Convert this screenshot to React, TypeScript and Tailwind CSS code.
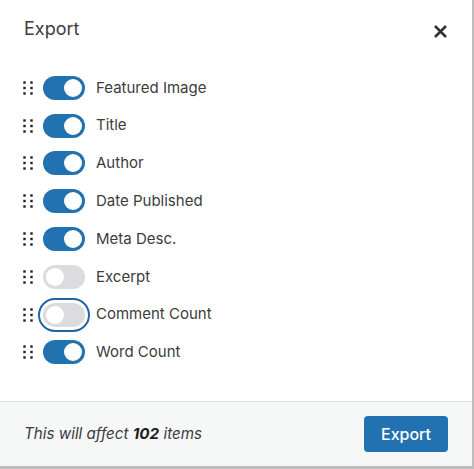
import React from "react";

type Field = { label: string; on: boolean; focused?: boolean };

const fields: Field[] = [
  { label: "Featured Image", on: true },
  { label: "Title", on: true },
  { label: "Author", on: true },
  { label: "Date Published", on: true },
  { label: "Meta Desc.", on: true },
  { label: "Excerpt", on: false },
  { label: "Comment Count", on: false, focused: true },
  { label: "Word Count", on: true },
];

function DragHandle() {
  return (
    <svg width="10" height="16" viewBox="0 0 10 16" className="shrink-0" aria-hidden>
      {[2.5, 8, 13.5].map((y) =>
        [1.5, 8.5].map((x) => (
          <rect key={`${x}-${y}`} x={x - 1.2} y={y - 1.2} width="2.4" height="2.4" fill="#1e1e1e" />
        ))
      )}
    </svg>
  );
}

function Toggle({ on, focused }: { on: boolean; focused?: boolean }) {
  return (
    <span
      className={`relative flex h-[24px] w-[42px] shrink-0 items-center rounded-full px-[3px] ${
        on ? "justify-end bg-[#2271b1]" : "justify-start bg-[#dcdcde]"
      } ${focused ? "outline-[2.5px] outline-offset-[3px] outline-[#1f67a3]" : ""}`}
    >
      <span className="h-[18px] w-[18px] rounded-full bg-white" />
    </span>
  );
}

export default function App() {
  return (
    <div
      className="flex h-[469px] w-[474px] flex-col border-r-2 border-b-[3px] border-[#bdbdbd] bg-white text-[#1e1e1e]"
      style={{ fontFamily: "Inter, 'Noto Sans', sans-serif" }}
    >
      <div className="flex h-[58px] items-center justify-between pl-[24px] pr-[24px]">
        <h1 className="text-[18px] font-normal leading-none text-[#3c3c3c]">Export</h1>
        <svg width="15" height="15" viewBox="0 0 15 15" aria-hidden className="mt-[4px]">
          <path d="M2 2 L13 13 M13 2 L2 13" stroke="#333" strokeWidth="2.6" />
        </svg>
      </div>

      <ul className="flex flex-1 flex-col pl-[23px] pt-[11px]">
        {fields.map((f) => (
          <li key={f.label} className="flex h-[37.8px] items-center">
            <DragHandle />
            <span className="ml-[10px]">
              <Toggle on={f.on} focused={f.focused} />
            </span>
            <span className="ml-[11px] text-[15px] text-[#3c3c3c]">{f.label}</span>
          </li>
        ))}
      </ul>

      <div className="flex h-[65px] items-center justify-between border-t border-[#dcdcde] bg-[#f6f7f7] pl-[24px] pr-[24px]">
        <p className="text-[15.2px] italic text-[#3c3c3c]">
          This will affect <span className="font-bold text-[#1e1e1e]">102</span> items
        </p>
        <button className="h-[36px] w-[84px] rounded-[4px] bg-[#2271b1] text-[16px] font-medium text-white">
          Export
        </button>
      </div>
    </div>
  );
}
